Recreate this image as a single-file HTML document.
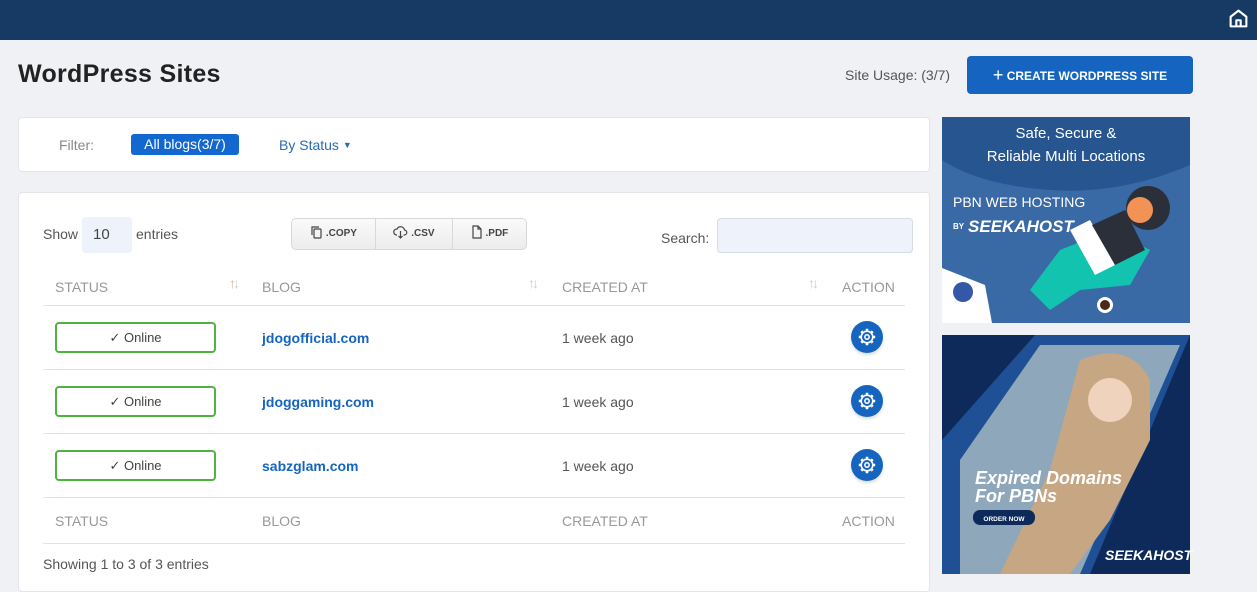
<!DOCTYPE html>
<html><head><meta charset="utf-8"><style>
*{box-sizing:border-box;margin:0;padding:0}
body{width:1257px;height:574px;overflow:hidden;background:#f0f1f5;font-family:"Liberation Sans",sans-serif;color:#555;position:relative}
.hdr{position:absolute;left:0;top:0;width:1257px;height:40px;background:#163a63}
.abs{position:absolute}
.card{position:absolute;background:#fff;border:1px solid #e3e5ea;border-radius:4px}
.th{position:absolute;font-size:14px;color:#999;}
.line{position:absolute;left:43px;width:862px;height:1px;background:#e2e2e2}
.badge{position:absolute;left:55px;width:161px;height:31px;border:2px solid #4db53a;border-radius:4px;font-size:13px;color:#444;text-align:center;line-height:27px}
.link{position:absolute;left:262px;font-size:14px;font-weight:bold;color:#1565c0}
.date{position:absolute;left:562px;font-size:14px;color:#555}
.gear{position:absolute;left:851px;width:32px;height:32px;border-radius:50%;background:#1565c0;box-shadow:0 2px 3px rgba(0,0,0,.15)}
.srt{position:absolute;font-size:14px;color:#ccc;letter-spacing:-3px}
</style></head><body>
<div class="hdr"></div>
<svg class="abs" style="left:1228px;top:8px" width="21" height="21" viewBox="0 0 24 24" fill="none" stroke="#fff" stroke-width="2.4" stroke-linejoin="round"><path d="M3 10 L12 3 L21 10 V21 H3 Z"/><path d="M9.5 21 V14 H14.5 V21"/></svg>
<div class="abs" style="left:18px;top:60px;font-size:25px;font-weight:bold;color:#222;letter-spacing:0.3px">WordPress Sites</div>
<div class="abs" style="left:845px;top:67px;font-size:14px;color:#555">Site Usage: (3/7)</div>
<div class="abs" style="left:967px;top:56px;width:226px;height:38px;background:#1565c0;border-radius:4px;color:#fff;font-size:12px;font-weight:bold;line-height:38px;text-align:center"><span style="font-size:18px;font-weight:normal;vertical-align:-1px">+</span> CREATE WORDPRESS SITE</div>

<div class="card" style="left:18px;top:117px;width:912px;height:55px"></div>
<div class="abs" style="left:59px;top:137px;font-size:14px;color:#888">Filter:</div>
<div class="abs" style="left:131px;top:134px;width:108px;height:21px;background:#1368d0;border-radius:3px;color:#fff;font-size:14px;line-height:21px;text-align:center">All blogs(3/7)</div>
<div class="abs" style="left:279px;top:137px;font-size:14px;color:#2a6bb5">By Status <span style="font-size:9px;vertical-align:2px">▼</span></div>

<div class="card" style="left:18px;top:192px;width:912px;height:400px"></div>
<div class="abs" style="left:43px;top:226px;font-size:14px">Show</div>
<div class="abs" style="left:82px;top:217px;width:50px;height:36px;background:#eef3fb;border-radius:4px;font-size:15px;line-height:36px;padding-left:11px;color:#444">10</div>
<div class="abs" style="left:136px;top:226px;font-size:14px">entries</div>
<div class="abs" style="left:291px;top:218px;width:236px;height:32px;border:1px solid #d6d8dc;border-radius:5px;background:linear-gradient(#fafafa,#ececec);font-size:10px;font-weight:bold;color:#444;display:flex">
<div style="width:84px;border-right:1px solid #d6d8dc;text-align:center;line-height:30px"><svg width="13" height="14" viewBox="0 0 13 14" fill="none" stroke="#444" stroke-width="1.2" style="vertical-align:-3px"><rect x="4" y="4" width="7" height="9" rx="1"/><path d="M2 10V2h7"/></svg> .COPY</div>
<div style="width:77px;border-right:1px solid #d6d8dc;text-align:center;line-height:30px"><svg width="15" height="14" viewBox="0 0 15 14" fill="none" stroke="#444" stroke-width="1.2" style="vertical-align:-3px"><path d="M4 10H3.5A3 3 0 0 1 4 4a4 4 0 0 1 7.5 1A2.5 2.5 0 0 1 11 10h-0.5"/><path d="M7.5 6v7M5.5 11l2 2 2-2"/></svg> .CSV</div>
<div style="flex:1;text-align:center;line-height:30px"><svg width="12" height="14" viewBox="0 0 12 14" fill="none" stroke="#444" stroke-width="1.2" style="vertical-align:-3px"><path d="M2 1h5l3 3v9H2z"/><path d="M7 1v3h3"/></svg> .PDF</div></div>
<div class="abs" style="left:661px;top:230px;font-size:14px">Search:</div>
<div class="abs" style="left:717px;top:218px;width:196px;height:35px;background:#eef3fb;border:1px solid #d5dce6;border-radius:4px"></div>

<div class="th" style="left:55px;top:279px">STATUS</div><div class="srt" style="left:229px;top:275px;color:#e4b48a">↑<span style="color:#ccc">↓</span></div>
<div class="th" style="left:262px;top:279px">BLOG</div><div class="srt" style="left:528px;top:275px">↑↓</div>
<div class="th" style="left:562px;top:279px">CREATED AT</div><div class="srt" style="left:808px;top:275px">↑↓</div>
<div class="th" style="left:842px;top:279px">ACTION</div>
<div class="line" style="top:305px"></div>

<div class="badge" style="top:322px">✓ Online</div><div class="link" style="top:330px">jdogofficial.com</div><div class="date" style="top:330px">1 week ago</div><div class="gear" style="top:321px"></div>
<div class="line" style="top:369px"></div>
<div class="badge" style="top:386px">✓ Online</div><div class="link" style="top:394px">jdoggaming.com</div><div class="date" style="top:394px">1 week ago</div><div class="gear" style="top:385px"></div>
<div class="line" style="top:433px"></div>
<div class="badge" style="top:450px">✓ Online</div><div class="link" style="top:458px">sabzglam.com</div><div class="date" style="top:458px">1 week ago</div><div class="gear" style="top:449px"></div>
<div class="line" style="top:497px"></div>
<div class="th" style="left:55px;top:513px">STATUS</div><div class="th" style="left:262px;top:513px">BLOG</div><div class="th" style="left:562px;top:513px">CREATED AT</div><div class="th" style="left:842px;top:513px">ACTION</div>
<div class="line" style="top:543px"></div>
<div class="abs" style="left:43px;top:556px;font-size:14px">Showing 1 to 3 of 3 entries</div>

<svg class="abs" style="left:0;top:0" width="1257" height="574">
<defs><g id="g"><circle r="5.8" fill="none" stroke="#fff" stroke-width="1.6"/><circle r="2.2" fill="none" stroke="#fff" stroke-width="1.5"/><g stroke="#fff" stroke-width="2.6"><path d="M0-6v-2.2M0 6v2.2M-6 0h-2.2M6 0h2.2M4.2 4.2l1.5 1.5M-4.2-4.2l-1.5-1.5M4.2-4.2l1.5-1.5M-4.2 4.2l-1.5 1.5"/></g></g></defs>
<use href="#g" x="867" y="337"/><use href="#g" x="867" y="401"/><use href="#g" x="867" y="465"/>
<rect x="942" y="117" width="248" height="206" fill="#3a6aa6"/>
<path d="M942 117H1190V165Q1120 195 1050 190Q980 185 942 160Z" fill="#26558f"/>
<path d="M942 268L985 285L992 323H942Z" fill="#fff"/>
<path d="M1030 290L1060 250L1110 230L1150 250L1130 285L1080 290L1050 310Z" fill="#12c4b0"/>
<circle cx="1148" cy="208" r="22" fill="#2b2f3a"/><circle cx="1140" cy="210" r="13" fill="#f39255"/>
<path d="M1070 230L1090 220L1115 265L1095 275Z" fill="#fff"/>
<path d="M1092 225L1125 210L1145 250L1115 265Z" fill="#2b2f3a"/>
<circle cx="1105" cy="305" r="8" fill="#fff"/><circle cx="1105" cy="305" r="5" fill="#4a2a1a"/>
<text x="1066" y="138" fill="#fff" font-size="15" font-family="Liberation Sans" text-anchor="middle">Safe, Secure &amp;</text>
<text x="1066" y="161" fill="#fff" font-size="15" font-family="Liberation Sans" text-anchor="middle">Reliable Multi Locations</text>
<text x="953" y="207" fill="#fff" font-size="14" font-family="Liberation Sans">PBN WEB HOSTING</text>
<text x="953" y="229" fill="#fff" font-size="8" font-weight="bold" font-family="Liberation Sans">BY</text>
<text x="968" y="232" fill="#fff" font-size="17" font-weight="bold" font-style="italic" font-family="Liberation Sans">SEEKAHOST</text>
<circle cx="963" cy="292" r="10" fill="#3557a8"/>
<rect x="942" y="335" width="248" height="239" fill="#0d2a5a"/>
<path d="M1035 335H1190L1090 574H942V440Z" fill="#1f4f95"/>
<path d="M1040 345H1180L1080 574H960V460Z" fill="#8ea7bb"/>
<path d="M1080 360Q1130 340 1150 380L1150 440L1110 520L1070 574H1000L1050 470Z" fill="#c7a683"/>
<circle cx="1110" cy="400" r="22" fill="#efd3bd"/>
<text x="975" y="484" fill="#fff" font-size="18" font-weight="bold" font-style="italic" font-family="Liberation Sans">Expired Domains</text>
<text x="975" y="502" fill="#fff" font-size="18" font-weight="bold" font-style="italic" font-family="Liberation Sans">For PBNs</text>
<rect x="973" y="510" width="62" height="15" rx="7" fill="#0d2a5a"/>
<text x="1004" y="521" fill="#fff" font-size="6.5" font-weight="bold" text-anchor="middle" font-family="Liberation Sans">ORDER NOW</text>
<text x="1105" y="560" fill="#fff" font-size="14" font-weight="bold" font-style="italic" font-family="Liberation Sans">SEEKAHOST</text>
</svg>
</body></html>
